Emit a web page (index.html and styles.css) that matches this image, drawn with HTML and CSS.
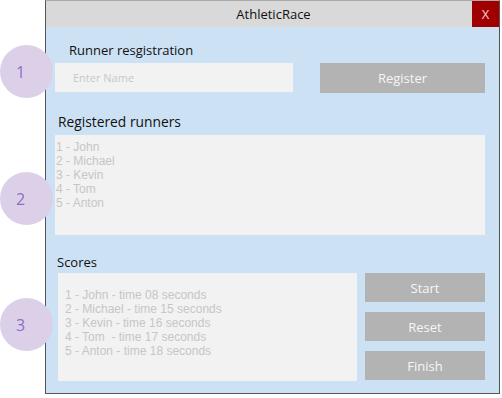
FILE: index.html
```html
<!DOCTYPE html>
<html>
<head>
    <meta charset="UTF-8">
    <title>AthleticRace</title>
    <link rel="stylesheet" href="styles.css">
</head>
<body>
    <div class="stage">
        <div class="window">
            <div class="title-bar">
                <span class="title">AthleticRace</span>
                <div class="close-button">X</div>
            </div>
            <div class="content">
                <div class="section-label first">Runner resgistration</div>
                <div class="register-row">
                    <div class="name-input">Enter Name</div>
                    <div class="gray-button register">Register</div>
                </div>

                <div class="section-label runners-label">Registered runners</div>
                <div class="list-box runners">
                    <div>1 - John</div>
                    <div>2 - Michael</div>
                    <div>3 - Kevin</div>
                    <div>4 - Tom</div>
                    <div>5 - Anton</div>
                </div>

                <div class="section-label scores-label">Scores</div>
                <div class="scores-row">
                    <div class="list-box scores">
                        <div>1 - John - time 08 seconds</div>
                        <div>2 - Michael - time 15 seconds</div>
                        <div>3 - Kevin - time 16 seconds</div>
                        <div>4 - Tom&nbsp; - time 17 seconds</div>
                        <div>5 - Anton - time 18 seconds</div>
                    </div>
                    <div class="race-buttons">
                        <div class="gray-button">Start</div>
                        <div class="gray-button">Reset</div>
                        <div class="gray-button">Finish</div>
                    </div>
                </div>
            </div>
        </div>

        <!-- step markers -->
        <div class="step step-1">1</div>
        <div class="step step-2">2</div>
        <div class="step step-3">3</div>
    </div>
</body>
</html>
```

FILE: styles.css
```css
body {
    margin: 0;
    background-color: white;
    font-family: "Open Sans", "Liberation Sans", sans-serif;
}
.stage {
    position: relative;
    width: 502px;
    height: 398px;
}
.window {
    margin-left: 45px;
    width: 455px;
    height: 394px;
    box-sizing: border-box;
    border: 1px solid #555;
    border-top-color: #aaa;
    background-color: #cce1f4;
    display: flex;
    flex-direction: column;
}
.title-bar {
    height: 26px;
    background-color: #d9d9d9;
    display: flex;
    align-items: center;
    justify-content: center;
    position: relative;
}
.title {
    font-size: 13px;
    color: #111;
    margin-left: 2px;
}
.close-button {
    position: absolute;
    right: 0;
    top: 0;
    width: 27px;
    height: 26px;
    background-color: #a00000;
    color: #f4d0d0;
    font-size: 13px;
    display: flex;
    align-items: center;
    justify-content: center;
}
.content {
    padding: 0 14px 0 9px;
    color: #111;
}
.section-label {
    font-size: 13px;
    line-height: 18px;
}
.section-label.first {
    margin-top: 14px;
    margin-left: 14px;
}
.register-row {
    display: flex;
    justify-content: space-between;
    margin-top: 4px;
}
.name-input {
    width: 238px;
    height: 29px;
    background-color: #f2f2f2;
    color: #c8c8c8;
    font-size: 11px;
    line-height: 29px;
    padding-left: 18px;
    box-sizing: border-box;
}
.gray-button {
    background-color: #b3b3b3;
    color: #f6f6f6;
    font-size: 13px;
    display: flex;
    align-items: center;
    justify-content: center;
}
.gray-button.register {
    width: 165px;
    height: 30px;
}
.runners-label {
    margin-top: 20px;
    margin-left: 3px;
    font-size: 13.8px;
}
.list-box {
    background-color: #f2f2f2;
    color: #c6c6c6;
    font-family: "Liberation Sans", sans-serif;
    font-size: 12px;
    line-height: 14px;
    box-sizing: border-box;
}
.runners {
    margin-top: 4px;
    height: 100px;
    padding: 5px 0 0 1px;
}
.scores-label {
    margin-top: 18px;
    margin-left: 2px;
}
.scores-row {
    display: flex;
    gap: 8px;
    margin-left: 3px;
    margin-top: 2px;
}
.scores {
    width: 299px;
    height: 108px;
    padding: 15px 0 0 7px;
}
.race-buttons {
    width: 120px;
    display: flex;
    flex-direction: column;
    gap: 10px;
}
.race-buttons .gray-button {
    height: 29px;
}
.step {
    position: absolute;
    width: 53px;
    height: 53px;
    border-radius: 50%;
    background-color: #dcd0e9;
    color: #8a70c4;
    font-size: 16px;
    display: flex;
    align-items: center;
    justify-content: center;
    box-sizing: border-box;
    padding-right: 12px;
}
.step-1 {
    left: 0;
    top: 45px;
}
.step-2 {
    left: 0;
    top: 172px;
}
.step-3 {
    left: 0;
    top: 298px;
}
```
